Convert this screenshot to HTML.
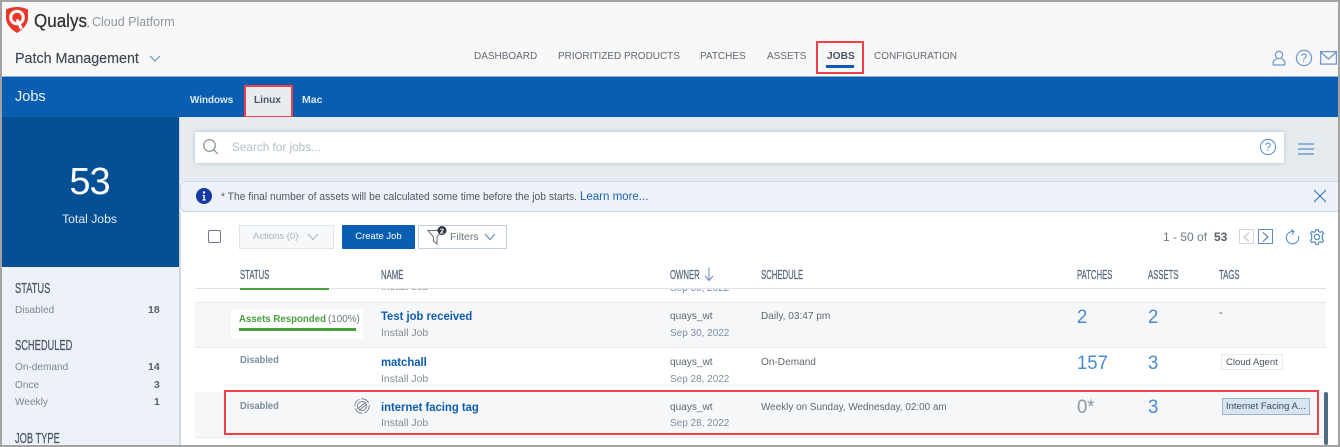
<!DOCTYPE html>
<html><head><meta charset="utf-8"><style>
html,body{margin:0;padding:0;width:1340px;height:447px;overflow:hidden;background:#fff;font-family:"Liberation Sans",sans-serif}
#w{position:absolute;left:0;top:0;width:1340px;height:447px;overflow:hidden;background:#f8f8f8;filter:blur(.3px)}
.b{position:absolute}
.t{position:absolute;white-space:nowrap;font-size:11px;line-height:14px;color:#6a7480;transform-origin:left center}
.c{transform:scaleX(.62);font-size:12.5px;color:#566779;-webkit-text-stroke:.25px #566779}
.sh{transform:scaleX(.62);font-size:15px;line-height:16px;color:#465464;-webkit-text-stroke:.25px #465464}
.nv{font-size:10.5px;color:#5f6974;transform:scaleX(.95)}
.o{color:#5f6770;font-size:10.5px;transform:scaleX(.96)}
.d{color:#7c8ea0;font-size:10.5px;transform:scaleX(.95)}
.l{color:#0e5cb0;font-weight:bold;font-size:12px;transform:scaleX(.94)}
.s{color:#838b94;font-size:10.5px}
.big{color:#4a8ad0;font-size:19.5px;line-height:24px;transform:scaleX(.95)}
.sd{color:#7d8d9c;font-weight:bold;font-size:10px;transform:scaleX(.93)}
.sl{font-size:10.5px;color:#7b8794;transform:scaleX(.96)}
.sn{font-size:10.5px;font-weight:bold;color:#566270}
svg{position:absolute;overflow:visible}
</style></head><body><div id="w">

<!-- logo -->
<svg style="left:5px;top:6px" width="24" height="28" viewBox="0 0 24 28"><path d="M1 3.500 Q12 -1.500 23 3.500 L23 13 Q22 21 12 27 Q2 21 1 13Z" fill="#e8392b"/><circle cx="12" cy="11.500" r="6.300" fill="#e8392b" stroke="#fff" stroke-width="3"/><path d="M12 13.500 L16.500 23" stroke="#fff" stroke-width="3"/></svg>
<div class="t" style="left:34px;top:10px;font-size:18.500px;line-height:22px;color:#2a2d30;-webkit-text-stroke:.2px #2a2d30;transform:scaleX(.92)">Qualys<span style="font-size:10px;color:#888">.</span></div>
<div class="t" style="left:92px;top:14px;font-size:12.500px;line-height:16px;color:#8c96a1">Cloud Platform</div>

<div class="t" style="left:15px;top:50px;font-size:14.500px;line-height:18px;color:#3e4854;transform:scaleX(.985);-webkit-text-stroke:.15px #3e4854">Patch Management</div>
<svg style="left:149px;top:55px" width="12" height="8"><path d="M1 1 L6 6 L11 1" fill="none" stroke="#5e84b5" stroke-width="1"/></svg>

<!-- nav -->
<div class="t nv" style="left:474px;top:49px">DASHBOARD</div>
<div class="t nv" style="left:558px;top:49px">PRIORITIZED PRODUCTS</div>
<div class="t nv" style="left:700px;top:49px">PATCHES</div>
<div class="t nv" style="left:767px;top:49px">ASSETS</div>
<div class="t nv" style="left:827px;top:49px;font-weight:bold;color:#4a5562;transform:scaleX(.97)">JOBS</div>
<div class="t nv" style="left:874px;top:49px">CONFIGURATION</div>
<div class="b" style="left:826px;top:65px;width:28px;height:3px;background:#0e5cb0"></div>
<div class="b" style="left:816px;top:41px;width:48px;height:33px;box-sizing:border-box;border:2px solid #f0414a"></div>

<!-- top icons -->
<svg style="left:1272px;top:50px" width="14" height="16" fill="none" stroke="#6d97cf" stroke-width="1.200"><circle cx="7" cy="5" r="3.600"/><path d="M1 15 Q1 9.500 4.500 9 M13 15 Q13 9.500 9.500 9 M1 15 H13"/></svg>
<svg style="left:1296px;top:50px" width="16" height="16" fill="none"><circle cx="8" cy="8" r="7.600" stroke="#6d97cf" stroke-width="1.200"/><text x="8" y="12" font-size="11.500" text-anchor="middle" fill="#5d8bc8" font-family="Liberation Sans">?</text></svg>
<svg style="left:1320px;top:51px" width="17" height="14" fill="none" stroke="#6d97cf" stroke-width="1.300"><rect x=".6" y=".6" width="15.800" height="12.500"/><path d="M.6 1 L8.500 8 L16.400 1"/></svg>

<!-- blue bar -->
<div class="b" style="left:0;top:76px;width:1340px;height:41px;background:#0a5eb2;border-top:1px solid #8eaed0;box-sizing:border-box"></div>
<div class="t" style="left:15px;top:88px;font-size:14.500px;line-height:18px;color:#eaf2fb">Jobs</div>
<div class="t" style="left:190px;top:93px;font-size:10.500px;font-weight:bold;color:#dbe8f6;transform:scaleX(.94)">Windows</div>
<div class="b" style="left:244px;top:85px;width:49px;height:33px;box-sizing:border-box;border:2px solid #f0414a;background:#e8ecef"></div>
<div class="t" style="left:254px;top:93px;font-size:10.500px;font-weight:bold;color:#4a5562;transform:scaleX(.96)">Linux</div>
<div class="t" style="left:302px;top:93px;font-size:10.500px;font-weight:bold;color:#dbe8f6">Mac</div>

<!-- sidebar -->
<div class="b" style="left:0;top:117px;width:179px;height:150px;background:#054f94"></div>
<div class="t" style="left:0;width:179px;text-align:center;top:160px;font-size:38px;line-height:44px;color:#fff;letter-spacing:-1px">53</div>
<div class="t" style="left:0;width:179px;text-align:center;top:212px;font-size:12.200px;color:#e4edf7">Total Jobs</div>
<div class="b" style="left:0;top:267px;width:179px;height:180px;background:#edf2f9"></div>
<div class="b" style="left:179px;top:117px;width:1px;height:330px;background:#ccd4dc"></div>
<div class="t sh" style="left:15px;top:281px">STATUS</div>
<div class="t sl" style="left:15px;top:303px">Disabled</div>
<div class="t sn" style="left:148px;top:303px">18</div>
<div class="t sh" style="left:15px;top:338px">SCHEDULED</div>
<div class="t sl" style="left:15px;top:360px">On-demand</div>
<div class="t sn" style="left:148px;top:360px">14</div>
<div class="t sl" style="left:15px;top:378px">Once</div>
<div class="t sn" style="left:154px;top:378px">3</div>
<div class="t sl" style="left:15px;top:395px">Weekly</div>
<div class="t sn" style="left:154px;top:395px">1</div>
<div class="t sh" style="left:15px;top:431px">JOB TYPE</div>

<!-- search area -->
<div class="b" style="left:180px;top:117px;width:1160px;height:64px;background:#e6ebef"></div>
<div class="b" style="left:195px;top:132px;width:1089px;height:31px;background:#fff;box-shadow:0 0 4px rgba(90,110,125,.35)"></div>
<svg style="left:203px;top:139px" width="16" height="16" fill="none" stroke="#7c8791" stroke-width="1.100"><circle cx="6.500" cy="6.500" r="5.800"/><path d="M10.800 10.800 L15 15"/></svg>
<div class="t" style="left:232px;top:140px;font-size:12px;color:#b4bcc4;transform:scaleX(.98)">Search for jobs...</div>
<svg style="left:1260px;top:139px" width="16" height="16" fill="none"><circle cx="8" cy="8" r="7.600" stroke="#6d97cf" stroke-width="1.200"/><text x="8" y="12" font-size="11.500" text-anchor="middle" fill="#5d8bc8" font-family="Liberation Sans">?</text></svg>
<div class="b" style="left:1298px;top:143px;width:16px;height:1.500px;background:#8db0dc;box-shadow:0 5px 0 #8db0dc,0 10px 0 #8db0dc"></div>

<!-- info bar -->
<div class="b" style="left:180px;top:181px;width:1160px;height:31px;box-sizing:border-box;background:#edf2f9;border:1px solid #c9d9ea;border-right:0;border-radius:6px 0 0 6px"></div>
<svg style="left:196px;top:188px" width="16" height="16"><circle cx="8" cy="8" r="8" fill="#1639a3"/><circle cx="8" cy="4.500" r="1.200" fill="#fff"/><path d="M6.500 7 H8.800 V11.500 H10 V12.500 H6.300 V11.500 H7.400 V8 H6.500Z" fill="#fff"/></svg>
<div class="t" style="left:221px;top:190px;font-size:10.800px;color:#4e5a66;transform:scaleX(.954)">* The final number of assets will be calculated some time before the job starts.</div>
<div class="t" style="left:580px;top:190px;font-size:11.500px;color:#1a63b3">Learn more...</div>
<svg style="left:1314px;top:190px" width="12" height="12" stroke="#3f74b5" stroke-width="1.100"><path d="M0 0 L12 12 M12 0 L0 12"/></svg>

<!-- table background -->
<div class="b" style="left:180px;top:212px;width:1158px;height:235px;background:#fff"></div>
<div class="b" style="left:180px;top:212px;width:1px;height:235px;background:#d5dbe1"></div>

<!-- toolbar -->
<div class="b" style="left:208px;top:230px;width:13px;height:13px;box-sizing:border-box;border:1px solid #6d7986;border-radius:2px;background:#fff"></div>
<div class="b" style="left:239px;top:225px;width:95px;height:24px;box-sizing:border-box;border:1px solid #dfe4e9;background:#f6f8fa"></div>
<div class="t" style="left:253px;top:230px;font-size:9.500px;color:#aab3bc">Actions (0)</div>
<svg style="left:307px;top:233px" width="12" height="8"><path d="M1 1 L6 6.500 L11 1" fill="none" stroke="#a8b2bc" stroke-width="1"/></svg>
<div class="b" style="left:342px;top:225px;width:73px;height:24px;background:#0a5eb2;border-radius:1px"></div>
<div class="t" style="left:342px;width:73px;text-align:center;top:230px;font-size:9.500px;color:#fff">Create Job</div>
<div class="b" style="left:418px;top:225px;width:89px;height:24px;box-sizing:border-box;border:1px solid #c2d0de;background:#fff"></div>
<svg style="left:427px;top:226px" width="20" height="20"><path d="M1 4.500 H15 L10 11 V18 L6.500 15 V11Z" fill="none" stroke="#5f6b77" stroke-width="1"/><circle cx="15" cy="4.500" r="4.500" fill="#2b3440"/><text x="15" y="7.500" font-size="7.500" font-weight="bold" fill="#fff" text-anchor="middle" font-family="Liberation Sans">2</text></svg>
<div class="t" style="left:450px;top:230px;font-size:10.500px;color:#6a7480">Filters</div>
<svg style="left:484px;top:233px" width="12" height="8"><path d="M1 1 L6 6.500 L11 1" fill="none" stroke="#5e84b5" stroke-width="1"/></svg>

<!-- pager -->
<div class="t" style="left:1163px;top:230px;font-size:12px;color:#6f7984">1 - 50 of</div>
<div class="t" style="left:1214px;top:230px;font-size:12px;font-weight:bold;color:#55606c">53</div>
<div class="b" style="left:1239px;top:229px;width:15px;height:15px;box-sizing:border-box;border:1px solid #cfd6dc"></div>
<svg style="left:1243px;top:232px" width="7" height="10"><path d="M6 .5 L1 5 L6 9.500" fill="none" stroke="#b5bec7"/></svg>
<div class="b" style="left:1258px;top:229px;width:15px;height:15px;box-sizing:border-box;border:1px solid #5a8ccb"></div>
<svg style="left:1262px;top:232px" width="7" height="10"><path d="M1 .5 L6 5 L1 9.500" fill="none" stroke="#3f6ea8"/></svg>
<svg style="left:1285px;top:229px" width="15" height="16" fill="none" stroke="#5a8ccb" stroke-width="1.100"><path d="M8.500 2.500 A6.200 6.200 0 1 0 13.500 7"/><path d="M6 .5 L9 2.500 L7 5.500"/></svg>
<svg style="left:1309px;top:229px" width="16" height="16" viewBox="0 0 16 16" fill="none" stroke="#4f86c6" stroke-width="1.100"><circle cx="8" cy="8" r="2.700"/><path d="M6.700 .7 H9.300 L9.700 2.700 L11.200 3.400 L13 2.400 L14.600 4.600 L13.200 6 L13.400 7.500 V8.500 L13.200 10 L14.600 11.400 L13 13.600 L11.200 12.600 L9.700 13.300 L9.300 15.300 H6.700 L6.300 13.300 L4.800 12.600 L3 13.600 L1.400 11.400 L2.800 10 L2.600 8.500 V7.500 L2.800 6 L1.400 4.600 L3 2.400 L4.800 3.400 L6.300 2.700Z"/></svg>

<!-- rows background -->
<div class="b" style="left:195px;top:302px;width:1131px;height:46px;background:#f6f7f9;border-top:1px solid #e8ebee;border-bottom:1px solid #e8ebee;box-sizing:border-box"></div>
<div class="b" style="left:195px;top:392px;width:1131px;height:46px;background:#f6f7f9;box-sizing:border-box;border-bottom:1px solid #e8ebee"></div>

<!-- clipped row under the header -->
<div class="t d" style="left:670px;top:281px">Sep 30, 2022</div>
<div class="t s" style="left:381px;top:280px">Install Job</div>
<div class="b" style="left:195px;top:262px;width:1131px;height:26px;background:#fff"></div>
<div class="b" style="left:240px;top:288px;width:89px;height:2px;background:#4aa03f"></div>
<div class="b" style="left:195px;top:288px;width:45px;height:1px;background:#dfe3e8"></div>
<div class="b" style="left:329px;top:288px;width:997px;height:1px;background:#dfe3e8"></div>

<div class="t c" style="left:240px;top:268px">STATUS</div>
<div class="t c" style="left:381px;top:268px">NAME</div>
<div class="t c" style="left:670px;top:268px">OWNER</div>
<svg style="left:704px;top:267px" width="10" height="15" fill="none" stroke="#5f8bbf"><path d="M5 .5 V13 M1 9 L5 13.500 L9 9"/></svg>
<div class="t c" style="left:761px;top:268px">SCHEDULE</div>
<div class="t c" style="left:1077px;top:268px">PATCHES</div>
<div class="t c" style="left:1148px;top:268px">ASSETS</div>
<div class="t c" style="left:1219px;top:268px">TAGS</div>

<!-- row 1 -->
<div class="b" style="left:231px;top:310px;width:132px;height:28px;background:#fff"></div>
<div class="t" style="left:239px;top:312px;font-size:10.500px;font-weight:bold;color:#4aa03f;transform:scaleX(.92)">Assets Responded</div>
<div class="t" style="left:328px;top:312px;font-size:10.500px;color:#6a7480;transform:scaleX(.94)">(100%)</div>
<div class="b" style="left:239px;top:328px;width:117px;height:3px;background:#4aa03f"></div>
<div class="t l" style="left:381px;top:309px">Test job received</div>
<div class="t s" style="left:381px;top:326px">Install Job</div>
<div class="t o" style="left:670px;top:309px">quays_wt</div>
<div class="t d" style="left:670px;top:326px">Sep 30, 2022</div>
<div class="t o" style="left:761px;top:309px">Daily, 03:47 pm</div>
<div class="t big" style="left:1077px;top:305px">2</div>
<div class="t big" style="left:1148px;top:305px">2</div>
<div class="t" style="left:1219px;top:306px;color:#555">-</div>

<!-- row 2 -->
<div class="t sd" style="left:240px;top:354px">Disabled</div>
<div class="t l" style="left:381px;top:355px">matchall</div>
<div class="t s" style="left:381px;top:372px">Install Job</div>
<div class="t o" style="left:670px;top:355px">quays_wt</div>
<div class="t d" style="left:670px;top:372px">Sep 28, 2022</div>
<div class="t o" style="left:761px;top:355px;transform:scaleX(.96)">On-Demand</div>
<div class="t big" style="left:1077px;top:351px">157</div>
<div class="t big" style="left:1148px;top:351px">3</div>
<div class="b" style="left:1221px;top:354px;width:62px;height:16px;box-sizing:border-box;border:1px solid #e8ebee;background:#fff"></div>
<div class="t" style="left:1226px;top:356px;font-size:9.500px;color:#4a5562">Cloud Agent</div>

<!-- row 3 -->
<div class="t sd" style="left:240px;top:400px">Disabled</div>
<svg style="left:354px;top:398px" width="16" height="16" fill="none" stroke="#7b8691" stroke-width="1"><circle cx="8" cy="8" r="7.200" stroke-dasharray="9 2"/><circle cx="8" cy="8" r="4.500"/><path d="M3.500 11 L12 4 M5 12.500 L13 6"/></svg>
<div class="t l" style="left:381px;top:400px">internet facing tag</div>
<div class="t s" style="left:381px;top:416px">Install Job</div>
<div class="t o" style="left:670px;top:400px">quays_wt</div>
<div class="t d" style="left:670px;top:416px">Sep 28, 2022</div>
<div class="t o" style="left:761px;top:400px;transform:scaleX(.945)">Weekly on Sunday, Wednesday, 02:00 am</div>
<div class="t big" style="left:1077px;top:395px;color:#8b98a5">0*</div>
<div class="t big" style="left:1148px;top:395px">3</div>
<div class="b" style="left:1222px;top:398px;width:88px;height:17px;box-sizing:border-box;border:1px solid #9db4c8;background:#d7e5f3"></div>
<div class="t" style="left:1226px;top:400px;font-size:9.500px;color:#3f4a56">Internet Facing A...</div>
<div class="b" style="left:224px;top:390px;width:1095px;height:45px;box-sizing:border-box;border:2px solid #f0414a"></div>
<div class="b" style="left:1324px;top:392px;width:4px;height:53px;background:#4f6b84;border-radius:2px"></div>

</div>
<!-- screenshot border -->
<div class="b" style="left:0;top:0;width:1340px;height:447px;box-sizing:border-box;border:2px solid #a3a3a3;pointer-events:none"></div>
</body></html>
